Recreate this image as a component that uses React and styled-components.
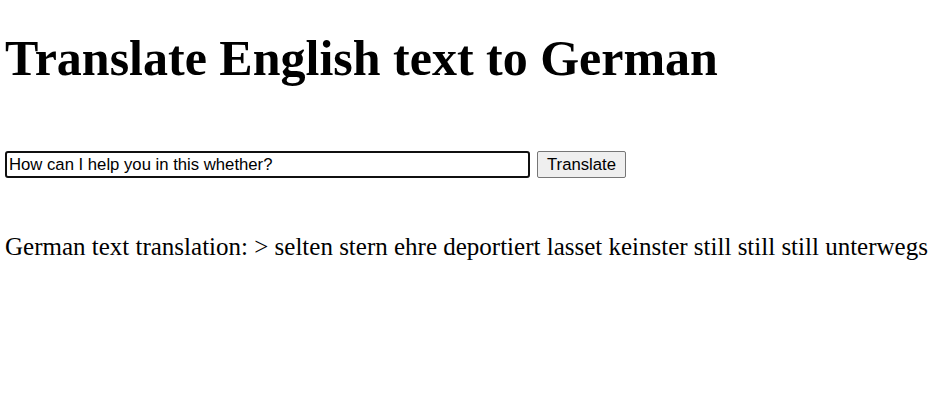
import React from "react";
import styled, { createGlobalStyle } from "styled-components";

const Global = createGlobalStyle`
  html, body { margin: 0; padding: 0; background: #fff; }
  body { font-family: "Liberation Serif", "Times New Roman", serif; color: #000; }
`;

const Page = styled.div`
  padding: 0 5px;
`;

const Title = styled.h1`
  font-family: "Liberation Serif", serif;
  font-weight: bold;
  font-size: 50px;
  line-height: 58px;
  margin: 29px 0 0;
`;

const Form = styled.form`
  display: flex;
  align-items: center;
  gap: 7px;
  margin-top: 64px;
`;

const Input = styled.input`
  box-sizing: border-box;
  width: 525px;
  height: 27px;
  border: 2px solid #101010;
  border-radius: 3px;
  padding: 0 2px;
  font-family: "Liberation Sans", Arial, sans-serif;
  font-size: 16.7px;
  color: #000;
  outline: none;
`;

const Button = styled.button`
  box-sizing: border-box;
  height: 27px;
  padding: 0 9px;
  border: 1px solid #767676;
  border-radius: 2px;
  background: #efefef;
  font-family: "Liberation Sans", Arial, sans-serif;
  font-size: 16.7px;
  color: #000;
`;

const Result = styled.p`
  font-family: "Liberation Serif", serif;
  font-size: 25px;
  margin: 55px 0 0;
  white-space: nowrap;
`;

export default function App() {
  return (
    <Page>
      <Global />
      <Title>Translate English text to German</Title>
      <Form onSubmit={(e) => e.preventDefault()}>
        <Input defaultValue="How can I help you in this whether?" />
        <Button type="submit">Translate</Button>
      </Form>
      <Result>
        German text translation: &gt; selten stern ehre deportiert lasset keinster still still still unterwegs
      </Result>
    </Page>
  );
}
